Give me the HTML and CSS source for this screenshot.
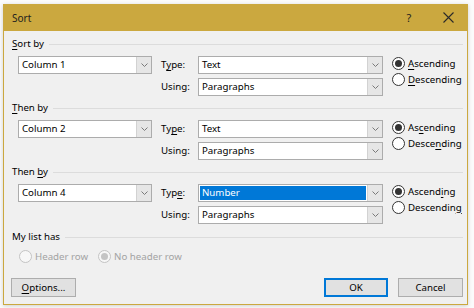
FILE: index.html
```html
<!DOCTYPE html>
<html>
<head>
<meta charset="utf-8">
<title>Sort</title>
<link rel="stylesheet" href="styles.css">
</head>
<body>
<div class="dialog">
  <div class="titlebar">
    <span class="title">Sort</span>
    <span class="help">?</span>
    <span class="close"><svg width="11" height="11" viewBox="0 0 11 11"><path d="M0.5 0.5 L10.5 10.5 M10.5 0.5 L0.5 10.5" stroke="#2a2a2a" stroke-width="1.1" fill="none"/></svg></span>
  </div>
  <div class="content">
    <div class="group">
      <div class="legend"><span><u>S</u>ort by</span><i class="rule"></i></div>
      <div class="rows">
        <div class="combo"><span class="val">Column 1</span><span class="arrow"><svg width="7" height="4" viewBox="0 0 7 4"><path d="M0.5 0.5 L3.5 3.5 L6.5 0.5" stroke="#7a7a7a" fill="none"/></svg></span></div>
        <span class="lbl">T<u>y</u>pe:</span>
        <div class="combo"><span class="val">Text</span><span class="arrow"><svg width="7" height="4" viewBox="0 0 7 4"><path d="M0.5 0.5 L3.5 3.5 L6.5 0.5" stroke="#7a7a7a" fill="none"/></svg></span></div>
        <div class="radios">
          <div class="radio"><span class="circle on"></span><span><u>A</u>scending</span></div>
          <div class="radio"><span class="circle"></span><span><u>D</u>escending</span></div>
        </div>
        <span class="lbl r2">Using:</span>
        <div class="combo r2"><span class="val">Paragraphs</span><span class="arrow"><svg width="7" height="4" viewBox="0 0 7 4"><path d="M0.5 0.5 L3.5 3.5 L6.5 0.5" stroke="#7a7a7a" fill="none"/></svg></span></div>
      </div>
    </div>

    <div class="group">
      <div class="legend"><span><u>T</u>hen by</span><i class="rule"></i></div>
      <div class="rows">
        <div class="combo"><span class="val">Column 2</span><span class="arrow"><svg width="7" height="4" viewBox="0 0 7 4"><path d="M0.5 0.5 L3.5 3.5 L6.5 0.5" stroke="#7a7a7a" fill="none"/></svg></span></div>
        <span class="lbl">Ty<u>p</u>e:</span>
        <div class="combo"><span class="val">Text</span><span class="arrow"><svg width="7" height="4" viewBox="0 0 7 4"><path d="M0.5 0.5 L3.5 3.5 L6.5 0.5" stroke="#7a7a7a" fill="none"/></svg></span></div>
        <div class="radios">
          <div class="radio"><span class="circle on"></span><span>As<u>c</u>ending</span></div>
          <div class="radio"><span class="circle"></span><span>Desce<u>n</u>ding</span></div>
        </div>
        <span class="lbl r2">Using:</span>
        <div class="combo r2"><span class="val">Paragraphs</span><span class="arrow"><svg width="7" height="4" viewBox="0 0 7 4"><path d="M0.5 0.5 L3.5 3.5 L6.5 0.5" stroke="#7a7a7a" fill="none"/></svg></span></div>
      </div>
    </div>

    <div class="group">
      <div class="legend"><span>Then <u>b</u>y</span><i class="rule"></i></div>
      <div class="rows">
        <div class="combo"><span class="val">Column 4</span><span class="arrow"><svg width="7" height="4" viewBox="0 0 7 4"><path d="M0.5 0.5 L3.5 3.5 L6.5 0.5" stroke="#7a7a7a" fill="none"/></svg></span></div>
        <span class="lbl">Typ<u>e</u>:</span>
        <div class="combo"><span class="val sel">Number</span><span class="arrow"><svg width="7" height="4" viewBox="0 0 7 4"><path d="M0.5 0.5 L3.5 3.5 L6.5 0.5" stroke="#7a7a7a" fill="none"/></svg></span></div>
        <div class="radios">
          <div class="radio"><span class="circle on"></span><span>Ascend<u>i</u>ng</span></div>
          <div class="radio"><span class="circle"></span><span>Descendin<u>g</u></span></div>
        </div>
        <span class="lbl r2">Using:</span>
        <div class="combo r2"><span class="val">Paragraphs</span><span class="arrow"><svg width="7" height="4" viewBox="0 0 7 4"><path d="M0.5 0.5 L3.5 3.5 L6.5 0.5" stroke="#7a7a7a" fill="none"/></svg></span></div>
      </div>
    </div>

    <div class="listhas">
      <div class="legend"><span>My list has</span><i class="rule"></i></div>
      <div class="hdr-radios">
        <div class="radio disabled"><span class="circle"></span><span>Header row</span></div>
        <div class="radio disabled"><span class="circle on"></span><span>No header row</span></div>
      </div>
    </div>

    <div class="buttons">
      <button class="btn options"><u>O</u>ptions...</button>
      <span class="spacer"></span>
      <button class="btn ok">OK</button>
      <button class="btn">Cancel</button>
    </div>
  </div>
</div>
</body>
</html>
```

FILE: styles.css
```css
html, body {
  margin: 0;
  padding: 0;
}
body {
  background: #fbfbfb;
  width: 474px;
  height: 308px;
  overflow: hidden;
  font-family: "Noto Sans", "Open Sans", sans-serif;
  font-size: 9.7px;
  color: #000;
}
.dialog {
  margin: 4px 0 0 3px;
  width: 465px;
  box-shadow: 0 1px 4px rgba(0,0,0,0.18);
}
.titlebar {
  height: 27px;
  background: #cba83f;
  display: flex;
  align-items: center;
  padding-left: 9px;
  box-sizing: border-box;
}
.title {
  flex: 1;
  font-size: 10px;
  color: #1e1e1e;
  padding-top: 1px;
}
.help {
  font-size: 11px;
  color: #1e1e1e;
  width: 12px;
  text-align: center;
  margin-right: 28px;
}
.close {
  display: flex;
  width: 11px;
  margin-right: 14px;
}
.content {
  background: #f0f0f0;
  border: 1px solid #cba83f;
  border-top: none;
  padding: 6px 4px 7px 8px;
}
.group {
  height: 64px;
}
.legend {
  display: flex;
  align-items: center;
  height: 14px;
  line-height: 14px;
  white-space: nowrap;
}
.rule {
  flex: 1;
  height: 1px;
  background: #dcdcdc;
  margin-left: 5px;
}
.rows {
  display: grid;
  grid-template-columns: 134px 46px 185px 1fr;
  grid-template-rows: 18px 18px;
  row-gap: 4px;
  margin-top: 5px;
  padding-left: 6px;
}
.r2 {
  grid-row: 2;
}
.lbl.r2 {
  grid-column: 2;
}
.combo.r2 {
  grid-column: 3;
}
.lbl {
  padding-left: 9px;
  line-height: 18px;
}
.combo {
  display: flex;
  background: #fff;
  border: 1px solid #acacac;
  box-sizing: border-box;
  height: 18px;
}
.val {
  flex: 1;
  padding-left: 3px;
  line-height: 16px;
  white-space: nowrap;
}
.val.sel {
  margin: 1px 1px 1px 1px;
  padding-left: 2px;
  line-height: 14px;
  background: #0078d7;
  color: #fff;
}
.arrow {
  width: 14px;
  margin: 0;
  background: #e6e6e6;
  border-left: 1px solid #d2d2d2;
  display: flex;
  align-items: center;
  justify-content: center;
}
.radios {
  grid-row: 1 / 3;
  grid-column: 4;
  padding-left: 9px;
  margin-top: -1px;
}
.radio {
  display: flex;
  align-items: center;
  height: 16px;
  white-space: nowrap;
}
.circle {
  width: 13px;
  height: 13px;
  box-sizing: border-box;
  border: 1px solid #333;
  border-radius: 50%;
  background: #fff;
  margin-right: 3px;
  display: flex;
  align-items: center;
  justify-content: center;
  flex: none;
}
.circle.on::after {
  content: "";
  width: 7px;
  height: 7px;
  border-radius: 50%;
  background: #333;
}
.radio.disabled {
  color: #a3a3a3;
}
.radio.disabled .circle {
  border-color: #c4c4c4;
  background: #f7f7f7;
}
.radio.disabled .circle.on::after {
  background: #c4c4c4;
}
.listhas .legend {
  margin-top: 1px;
}
.hdr-radios {
  display: flex;
  margin-top: 4px;
  padding-left: 7px;
  height: 16px;
}
.hdr-radios .radio + .radio {
  margin-left: 10px;
}
.buttons {
  display: flex;
  margin-top: 14px;
  margin-left: -1px;
}
.spacer {
  flex: 1;
}
.btn {
  font-family: inherit;
  font-size: inherit;
  color: #000;
  background: #e1e1e1;
  border: 1px solid #adadad;
  height: 19px;
  width: 65px;
  padding: 0;
  box-sizing: border-box;
  margin: 0;
}
.btn.ok {
  border: 2px solid #0078d7;
  width: 64px;
  margin-right: 10px;
}
u {
  text-decoration-thickness: 1px;
  text-underline-offset: 1.5px;
}
```
